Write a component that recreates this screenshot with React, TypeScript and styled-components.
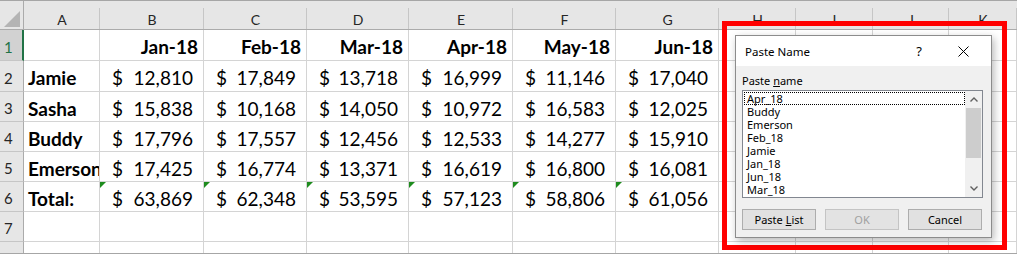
import styled, { createGlobalStyle } from 'styled-components';

const GlobalStyle = createGlobalStyle`
  html, body {
    margin: 0;
    padding: 0;
    background: #ffffff;
  }
  * {
    box-sizing: border-box;
  }
`;

const columns = ['A', 'B', 'C', 'D', 'E', 'F', 'G', 'H', 'I', 'J', 'K'];
const months = ['Jan-18', 'Feb-18', 'Mar-18', 'Apr-18', 'May-18', 'Jun-18'];

const people = [
  { name: 'Jamie', values: ['12,810', '17,849', '13,718', '16,999', '11,146', '17,040'] },
  { name: 'Sasha', values: ['15,838', '10,168', '14,050', '10,972', '16,583', '12,025'] },
  { name: 'Buddy', values: ['17,796', '17,557', '12,456', '12,533', '14,277', '15,910'] },
  { name: 'Emerson', values: ['17,425', '16,774', '13,371', '16,619', '16,800', '16,081'] },
  { name: 'Total:', values: ['63,869', '62,348', '53,595', '57,123', '58,806', '61,056'], flagged: true },
];

const names = ['Apr_18', 'Buddy', 'Emerson', 'Feb_18', 'Jamie', 'Jan_18', 'Jun_18', 'Mar_18'];

const Frame = styled.div`
  position: relative;
  width: 1017px;
  height: 254px;
  overflow: hidden;
  border-top: 1px solid #a6a6a6;
  border-bottom: 1px solid #a6a6a6;
  font-family: Lato, 'Liberation Sans', sans-serif;
  color: #000;
`;

const Sheet = styled.div`
  display: grid;
  grid-template-columns: 24px 76px 104px 103px 102px 104px 103px 103px 77px 77px 76px 1fr;
  grid-template-rows: 29px 31px 31px 30px 30px 30px 30px 30px 30px;
`;

const Corner = styled.div`
  background: #e6e6e6;
  border-bottom: 1px solid #ababab;
  border-right: 1px solid #ababab;
  display: flex;
  align-items: flex-end;
  justify-content: flex-end;
  padding: 0 3px 2px 0;
`;

const ColHead = styled.div`
  position: relative;
  background: #e6e6e6;
  border-bottom: 1px solid #ababab;
  display: flex;
  align-items: center;
  justify-content: center;
  padding-top: 8px;
  font-size: 14px;
  color: #262626;

  &::after {
    content: '';
    position: absolute;
    right: 0;
    top: 7px;
    bottom: 0;
    width: 1px;
    background: #c6c6c6;
  }
`;

const RowHead = styled.div<{ $active?: boolean }>`
  background: ${(p) => (p.$active ? '#d2d2d2' : '#e6e6e6')};
  color: ${(p) => (p.$active ? '#217346' : '#262626')};
  border-bottom: 1px solid #c6c6c6;
  border-right: ${(p) => (p.$active ? '2px solid #217346' : '1px solid #ababab')};
  display: flex;
  align-items: center;
  padding: 3px 0 0 4px;
  font-size: 15px;
`;

const Cell = styled.div<{ $align?: 'left' | 'right'; $bold?: boolean; $flag?: boolean }>`
  position: relative;
  overflow: hidden;
  white-space: nowrap;
  border-right: 1px solid #d4d4d4;
  border-bottom: 1px solid #d4d4d4;
  display: flex;
  align-items: center;
  justify-content: ${(p) => (p.$align === 'right' ? 'flex-end' : 'flex-start')};
  padding: 3px 5px 0 4px;
  font-size: 19px;
  font-weight: ${(p) => (p.$bold ? 700 : 400)};

  &::before {
    content: '';
    display: ${(p) => (p.$flag ? 'block' : 'none')};
    position: absolute;
    left: 0;
    top: 0;
    border-top: 6px solid #1e8c1e;
    border-right: 6px solid transparent;
  }
`;

const Money = styled(Cell)`
  justify-content: space-between;
  padding: 3px 10px 0 12px;
`;

const Highlight = styled.div`
  position: absolute;
  left: 722px;
  top: 20px;
  width: 285px;
  height: 229px;
  border: 5px solid #ff0000;
`;

const Dialog = styled.div`
  position: absolute;
  left: 735px;
  top: 34px;
  width: 257px;
  height: 203px;
  background: #f0f0f0;
  border: 1px solid #8c8c8c;
  box-shadow: 2px 3px 8px rgba(0, 0, 0, 0.28);
  display: flex;
  flex-direction: column;
  font-family: 'Noto Sans', 'Liberation Sans', sans-serif;
  font-size: 11px;
  color: #000;
`;

const TitleBar = styled.div`
  height: 30px;
  background: #ffffff;
  display: flex;
  align-items: center;
  padding: 0 14px 0 9px;
  font-size: 11.5px;
`;

const Title = styled.span`
  flex: 1;
`;

const TitleButton = styled.span`
  width: 28px;
  display: flex;
  justify-content: center;
  align-items: center;
  font-size: 13px;
`;

const Body = styled.div`
  flex: 1;
  display: flex;
  flex-direction: column;
  padding: 8px 8px 0 6px;
`;

const Label = styled.div`
  margin-bottom: 2px;
  line-height: 14px;
`;

const ListBox = styled.div`
  height: 108px;
  background: #ffffff;
  border: 1px solid #828790;
  display: flex;
`;

const Items = styled.div`
  flex: 1;
  padding: 1px 0 0 1px;
`;

const Item = styled.div<{ $focused?: boolean }>`
  height: 13px;
  line-height: 13px;
  padding-left: 3px;
  outline: ${(p) => (p.$focused ? '1px dotted #000' : 'none')};
  outline-offset: -1px;
`;

const ScrollBar = styled.div`
  width: 17px;
  background: #f0f0f0;
  display: flex;
  flex-direction: column;
  align-items: center;
`;

const Arrow = styled.div`
  height: 17px;
  width: 100%;
  display: flex;
  align-items: center;
  justify-content: center;
`;

const Thumb = styled.div`
  width: 15px;
  height: 50px;
  background: #cdcdcd;
`;

const Track = styled.div`
  flex: 1;
`;

const Buttons = styled.div`
  display: flex;
  justify-content: space-between;
  margin-top: 11px;
  padding-right: 1px;
`;

const Button = styled.div<{ $disabled?: boolean }>`
  width: 74px;
  height: 21px;
  background: ${(p) => (p.$disabled ? '#e3e3e3' : '#e1e1e1')};
  border: 1px solid ${(p) => (p.$disabled ? '#c4c4c4' : '#adadad')};
  color: ${(p) => (p.$disabled ? '#a0a0a0' : '#000')};
  display: flex;
  align-items: center;
  justify-content: center;
`;

const Chevron = ({ up }: { up?: boolean }) => (
  <svg width="8" height="5" viewBox="0 0 8 5">
    <path
      d={up ? 'M0.5 4.5 L4 1 L7.5 4.5' : 'M0.5 0.5 L4 4 L7.5 0.5'}
      fill="none"
      stroke="#606060"
      strokeWidth="1.4"
    />
  </svg>
);

export default function App() {
  return (
    <>
      <GlobalStyle />
      <Frame>
        <Sheet>
          <Corner>
            <svg width="16" height="16" viewBox="0 0 16 16">
              <polygon points="16,0 16,16 0,16" fill="#b4b4b4" />
            </svg>
          </Corner>
          {columns.map((c) => (
            <ColHead key={c}>{c}</ColHead>
          ))}

          <RowHead $active>1</RowHead>
          <Cell />
          {months.map((m) => (
            <Cell key={m} $align="right" $bold>
              {m}
            </Cell>
          ))}
          <Cell />
          <Cell />
          <Cell />
          <Cell />

          {people.map((p, i) => (
            <>
              <RowHead key={`h${i}`}>{i + 2}</RowHead>
              <Cell key={`n${i}`} $bold>
                {p.name}
              </Cell>
              {p.values.map((v, j) => (
                <Money key={`v${i}-${j}`} $flag={p.flagged}>
                  <span>$</span>
                  <span>{v}</span>
                </Money>
              ))}
              <Cell key={`e1${i}`} />
              <Cell key={`e2${i}`} />
              <Cell key={`e3${i}`} />
              <Cell key={`e4${i}`} />
            </>
          ))}

          {[7, 8].map((r) => (
            <>
              <RowHead key={`rh${r}`}>{r === 7 ? r : ''}</RowHead>
              {columns.map((c) => (
                <Cell key={`${c}${r}`} />
              ))}
            </>
          ))}
        </Sheet>

        <Highlight />

        <Dialog>
          <TitleBar>
            <Title>Paste Name</Title>
            <TitleButton>?</TitleButton>
            <TitleButton style={{ marginLeft: 16 }}>
              <svg width="11" height="11" viewBox="0 0 11 11">
                <path d="M0.5 0.5 L10.5 10.5 M10.5 0.5 L0.5 10.5" stroke="#000" strokeWidth="1" />
              </svg>
            </TitleButton>
          </TitleBar>
          <Body>
            <Label>
              Paste <u>n</u>ame
            </Label>
            <ListBox>
              <Items>
                {names.map((n, i) => (
                  <Item key={n} $focused={i === 0}>
                    {n}
                  </Item>
                ))}
              </Items>
              <ScrollBar>
                <Arrow>
                  <Chevron up />
                </Arrow>
                <Thumb />
                <Track />
                <Arrow>
                  <Chevron />
                </Arrow>
              </ScrollBar>
            </ListBox>
            <Buttons>
              <Button>
                <span>
                  Paste <u>L</u>ist
                </span>
              </Button>
              <Button $disabled>OK</Button>
              <Button>Cancel</Button>
            </Buttons>
          </Body>
        </Dialog>
      </Frame>
    </>
  );
}
